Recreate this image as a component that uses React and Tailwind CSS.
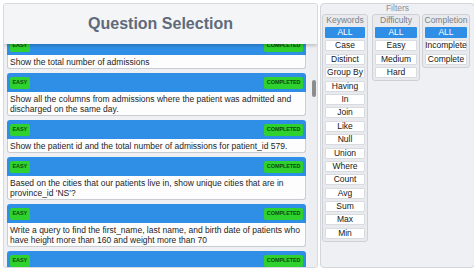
import React from "react";

const questions = [
  { lines: ["Show the total number of admissions"] },
  {
    lines: [
      "Show all the columns from admissions where the patient was admitted and",
      "discharged on the same day.",
    ],
  },
  { lines: ["Show the patient id and the total number of admissions for patient_id 579."] },
  {
    lines: [
      "Based on the cities that our patients live in, show unique cities that are in",
      "province_id 'NS'?",
    ],
  },
  {
    lines: [
      "Write a query to find the first_name, last name, and birth date of patients who",
      "have height more than 160 and weight more than 70",
    ],
  },
  { lines: ["Show first name, last name, and gender of patients whose gender is 'M'"] },
];

const keywords = [
  "ALL", "Case", "Distinct", "Group By", "Having", "In", "Join", "Like",
  "Null", "Union", "Where", "Count", "Avg", "Sum", "Max", "Min",
];
const difficulty = ["ALL", "Easy", "Medium", "Hard"];
const completion = ["ALL", "Incomplete", "Complete"];

const Badge = ({ children }) => (
  <span className="h-[12px] px-[2.5px] rounded-[2px] bg-[#2fd12f] text-[#0e4a0e] text-[5.5px] font-bold flex items-center tracking-[-0.1px]">
    {children}
  </span>
);

const QuestionCard = ({ lines }) => (
  <div className="w-full shrink-0">
    <div className="h-[19px] bg-[#2f8fe7] rounded-t-[3px] flex items-center justify-between px-[3px]">
      <Badge>EASY</Badge>
      <Badge>COMPLETED</Badge>
    </div>
    <div className="bg-[#fdfdfd] border border-t-0 border-[#c9cdd2] rounded-b-[3px] px-[2px] pt-[2px] pb-[1px] text-[8.5px] leading-[10px] text-[#1e1e1e] whitespace-nowrap">
      {lines.map((l, i) => (
        <div key={i}>{l}</div>
      ))}
    </div>
  </div>
);

const FilterColumn = ({ title, items, width, className }) => (
  <div className={`${width} ${className} bg-[#e8eaed] border border-[#cdd1d6] rounded-[3px] pb-[2px]`}>
    <div className="h-[12px] text-center text-[8.5px] leading-[11px] text-[#7a7f87]">{title}</div>
    <div className="flex flex-col gap-[2.4px] px-[2px]">
      {items.map((it, i) => (
        <div
          key={it}
          className={
            i === 0
              ? "h-[11px] bg-[#2f8fe7] text-white text-[8.5px] leading-[9px] rounded-[1px] flex items-center justify-center"
              : "h-[11px] bg-white border border-[#d8dbdf] text-[#161616] text-[8.5px] leading-[9px] rounded-[1px] flex items-center justify-center whitespace-nowrap"
          }
        >
          {it}
        </div>
      ))}
    </div>
  </div>
);

export default function App() {
  return (
    <div className="w-[474px] h-[273px] bg-white flex items-start pt-[3px] pl-[3px] overflow-hidden font-['Liberation_Sans',Arial,sans-serif]">
      {/* question list */}
      <div className="w-[315px] h-[265px] shrink-0 bg-[#eef0f3] border border-[#d6d9dd] rounded-[3px] flex flex-col overflow-hidden">
        <div className="h-[40px] shrink-0 relative z-10 bg-[#f4f5f7] shadow-[0_2px_3px_rgba(0,0,0,0.18)] flex items-center justify-center text-[16px] font-bold text-[#5f6b7a]">
          Question Selection
        </div>
        <div className="flex-1 min-h-0 flex">
          <div className="w-[305px] px-[3px] overflow-hidden">
            <div className="flex flex-col gap-[4px] -mt-[8px]">
              {questions.map((q, i) => (
                <QuestionCard key={i} lines={q.lines} />
              ))}
            </div>
          </div>
          <div className="w-[8px] bg-[#eceef1]">
            <div className="ml-[2.5px] mt-[36px] w-[4.5px] h-[17px] rounded-[2px] bg-[#8c8c8c]" />
          </div>
        </div>
      </div>

      {/* filters */}
      <div className="ml-[2px] w-[155px] h-[265px] shrink-0 bg-[#eef0f3] border border-[#d3d6da] rounded-[4px]">
        <div className="h-[10px] text-center text-[8.5px] leading-[9px] text-[#8b9096]">Filters</div>
        <div className="flex items-start pl-[1px]">
          <FilterColumn title="Keywords" items={keywords} width="w-[46px]" className="" />
          <FilterColumn title="Difficulty" items={difficulty} width="w-[48px]" className="ml-[4px]" />
          <FilterColumn title="Completion" items={completion} width="w-[48px]" className="ml-[2px]" />
        </div>
      </div>
    </div>
  );
}
